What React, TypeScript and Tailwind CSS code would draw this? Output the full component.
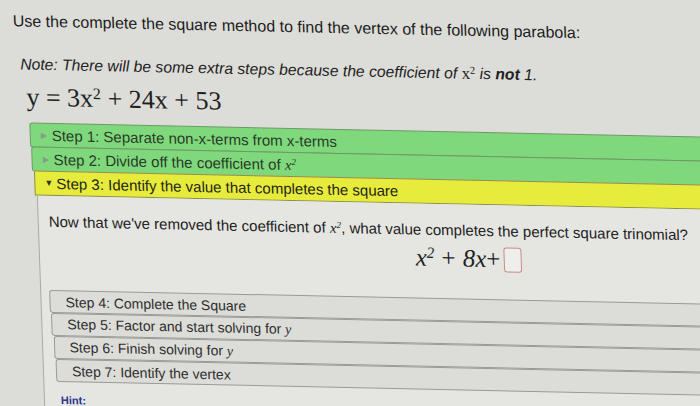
const closedSteps = [
  { label: 'Step 1: Separate non-x-terms from x-terms', indent: 'ml-[25px]' },
  { label: 'Step 2: Divide off the coefficient of ', math: true, indent: 'ml-[26px] -mt-[1px]' },
]

const laterSteps = [
  { label: 'Step 4: Complete the Square', indent: 'ml-[8px]' },
  { label: 'Step 5: Factor and start solving for ', v: 'y', indent: 'ml-[9px]' },
  { label: 'Step 6: Finish solving for ', v: 'y', indent: 'ml-[10.5px]' },
  { label: 'Step 7: Identify the vertex', indent: 'ml-[12px]' },
]

const serif = "font-['Liberation_Serif',serif]"

function Sq() {
  return <sup className="relative top-[-0.5em] text-[0.62em] leading-none">2</sup>
}

export default function App() {
  return (
    <div className="h-[406px] w-[700px] overflow-hidden bg-[#dcdcd8]">
      <div className="w-[760px] origin-top-left [transform:matrix(1,0.021,0.035,1,0,0)] font-['Liberation_Sans',Arial,sans-serif] text-[#262626]">
        <p className="ml-[12px] pt-[10px] text-[16px] leading-[22px] text-[#1c1c1c]">
          Use the complete the square method to find the vertex of the following parabola:
        </p>
        <p className="ml-[18px] mt-[21px] text-[15.7px] italic leading-[22px] text-[#222]">
          Note: There will be some extra steps because the coefficient of{' '}
          <span className={`${serif} text-[17px] not-italic`}>
            x<Sq />
          </span>{' '}
          is <b>not</b> 1.
        </p>
        <p className={`${serif} ml-[23px] mt-[7px] text-[26px] leading-[30px] text-[#1f1f1f]`}>
          y = 3x<Sq /> + 24x + 53
        </p>

        <div className="mt-[10px] flex flex-col">
          {closedSteps.map((s, i) => (
            <div
              key={i}
              className={`${s.indent} flex h-[25px] items-center rounded-l-[3px] border border-[#6f9a68] bg-[#7fd97c]`}
            >
              <span className="ml-[10px] w-[11px] text-[8px] text-[#8a9a86]">▶</span>
              <span className="text-[15px] leading-none text-[#2a3a28]">
                {s.label}
                {s.math && (
                  <span className={`${serif} italic`}>
                    x<Sq />
                  </span>
                )}
              </span>
            </div>
          ))}
        </div>

        <div className="ml-[28px] -mt-[1px] flex flex-col">
          <div className="flex h-[25px] items-center border border-[#8d8f58] bg-[#e6eb3c]">
            <span className="ml-[9px] w-[12px] text-[9px] text-[#333]">▼</span>
            <span className="text-[15px] leading-none text-[#262619]">
              Step 3: Identify the value that completes the square
            </span>
          </div>
          <div className="ml-[2px] flex flex-col border-l border-[#a8a8a4] bg-[#e5e6e2] pb-[5px]">
            <p className="ml-[10px] mt-[16px] text-[15px] leading-[20px] text-[#222]">
              Now that we've removed the coefficient of{' '}
              <span className={`${serif} italic`}>
                x<Sq />
              </span>
              , what value completes the perfect square trinomial?
            </p>
            <div className={`${serif} ml-[376px] mt-[4px] flex items-center text-[25px] italic leading-[28px] text-[#1f1f1f]`}>
              <span>
                x<Sq />
              </span>
              <span className="mx-[7px] not-italic">+</span>
              <span>8x</span>
              <span className="not-italic">+</span>
              <span className="ml-[3px] h-[25px] w-[18px] rounded-[3px] border border-[#c98a86] bg-[#eeeeec]" />
            </div>
            <div className="mt-[26px] flex flex-col">
              {laterSteps.map((s, i) => (
                <div
                  key={i}
                  className={`${s.indent} flex h-[23px] items-center rounded-l-[3px] border border-[#9a9a96] bg-[#dcdcd8]`}
                >
                  <span className="ml-[15px] text-[14px] leading-none text-[#2e2e2e]">
                    {s.label}
                    {s.v && <span className={`${serif} italic`}>{s.v}</span>}
                  </span>
                </div>
              ))}
            </div>
            <p className="ml-[16px] mt-[10px] text-[11px] font-bold text-[#2b3590]">Hint:</p>
          </div>
        </div>
      </div>
    </div>
  )
}
